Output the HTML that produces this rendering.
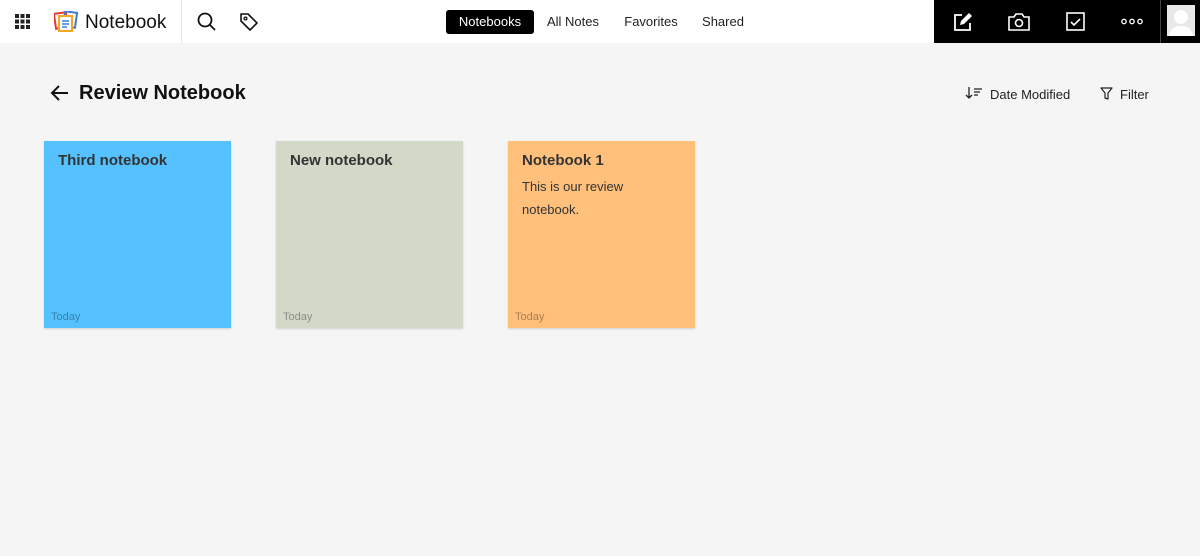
<!DOCTYPE html>
<html><head><style>
*{margin:0;padding:0;box-sizing:border-box}
body{width:1200px;height:556px;background:#f5f5f5;font-family:"Liberation Sans",sans-serif;position:relative;overflow:hidden}
.top{position:absolute;left:0;top:0;width:1200px;height:43px;background:#fff}
.blk{position:absolute;left:934px;top:0;width:266px;height:43px;background:#000}
.abs{position:absolute}
.tab{position:absolute;top:10px;height:24px;font-size:13px;line-height:24px;color:#222;text-align:center}
.card{position:absolute;top:141px;width:187px;height:187px;box-shadow:0 1px 2px rgba(0,0,0,.15)}
.card h3{position:absolute;left:14px;top:11px;font-size:15px;font-weight:bold;color:#333}
.card p{position:absolute;left:14px;top:34px;font-size:13px;line-height:23px;color:#333;width:160px}
.card span{position:absolute;left:7px;bottom:5px;font-size:11px;color:rgba(0,0,0,.35)}
</style></head><body>
<div class="top"></div>
<svg class="abs" style="left:15px;top:14px" width="15" height="15"><g fill="#222"><rect x="0" y="0" width="4" height="4"/><rect x="5.5" y="0" width="4" height="4"/><rect x="11" y="0" width="4" height="4"/><rect x="0" y="5.5" width="4" height="4"/><rect x="5.5" y="5.5" width="4" height="4"/><rect x="11" y="5.5" width="4" height="4"/><rect x="0" y="11" width="4" height="4"/><rect x="5.5" y="11" width="4" height="4"/><rect x="11" y="11" width="4" height="4"/></g></svg>
<svg class="abs" style="left:54px;top:11px" width="24" height="22"><rect x="1" y="2" width="12" height="15" fill="none" stroke="#e33" stroke-width="2" transform="rotate(-8 7 10)"/><rect x="10" y="1" width="12" height="15" fill="none" stroke="#3a7bd5" stroke-width="2" transform="rotate(8 16 9)"/><rect x="5" y="5" width="13" height="15" fill="#fff" stroke="#f5a623" stroke-width="2"/><path d="M8 10h7M8 13h7M8 16h5" stroke="#3a7bd5" stroke-width="1.5"/></svg>
<div class="abs" style="left:85px;top:12px;font-size:19px;color:#111">Notebook</div>
<div class="abs" style="left:181px;top:0;width:1px;height:43px;background:#e5e5e5"></div>
<svg class="abs" style="left:197px;top:12px" width="20" height="20"><circle cx="8" cy="8" r="6.5" fill="none" stroke="#111" stroke-width="1.8"/><path d="M13 13l5 5" stroke="#111" stroke-width="1.8"/></svg>
<svg class="abs" style="left:239px;top:12px" width="20" height="20"><path d="M2 2h7l9 9-7 7-9-9z" fill="none" stroke="#111" stroke-width="1.6" stroke-linejoin="round"/><circle cx="6.5" cy="6.5" r="1.4" fill="none" stroke="#111" stroke-width="1.3"/></svg>
<div class="tab" style="left:446px;width:88px;background:#000;color:#fff;border-radius:3px">Notebooks</div>
<div class="tab" style="left:543px;width:60px">All Notes</div>
<div class="tab" style="left:622px;width:58px">Favorites</div>
<div class="tab" style="left:700px;width:46px">Shared</div>
<div class="blk"></div>
<svg class="abs" style="left:953px;top:12px" width="20" height="20"><path d="M9 3H2v15h15v-7" fill="none" stroke="#fff" stroke-width="1.8"/><path d="M7 13l1-4 8-8 3 3-8 8z" fill="#fff"/></svg>
<svg class="abs" style="left:1008px;top:12px" width="22" height="20"><path d="M1 5h5l2-3h6l2 3h5v13H1z" fill="none" stroke="#fff" stroke-width="1.6"/><circle cx="11" cy="11" r="3.5" fill="none" stroke="#fff" stroke-width="1.6"/></svg>
<svg class="abs" style="left:1066px;top:12px" width="19" height="19"><rect x="1" y="1" width="17" height="17" fill="none" stroke="#fff" stroke-width="1.6"/><path d="M5 10l3 3 6-6" fill="none" stroke="#fff" stroke-width="1.6"/></svg>
<svg class="abs" style="left:1121px;top:18px" width="22" height="7"><g fill="none" stroke="#fff" stroke-width="1.3"><circle cx="3" cy="3.5" r="2.2"/><circle cx="11" cy="3.5" r="2.2"/><circle cx="19" cy="3.5" r="2.2"/></g></svg>
<div class="abs" style="left:1160px;top:0;width:1px;height:43px;background:#444"></div>
<div class="abs" style="left:1167px;top:5px;width:28px;height:31px;background:#e8e8e8;overflow:hidden"><svg width="28" height="31"><circle cx="14" cy="12" r="7" fill="#fff"/><path d="M2 31c1-8 6-10 12-10s11 2 12 10z" fill="#fff"/></svg></div>
<svg class="abs" style="left:50px;top:84px" width="20" height="18"><path d="M18 9H3M9 2L2 9l7 7" fill="none" stroke="#111" stroke-width="2"/></svg>
<div class="abs" style="left:79px;top:82px;font-size:20px;font-weight:bold;color:#111">Review Notebook</div>
<svg class="abs" style="left:965px;top:87px" width="18" height="13"><path d="M4 0v11M1 8l3 3 3-3" fill="none" stroke="#222" stroke-width="1.3"/><path d="M9 2h8M9 5h6M9 8h4" stroke="#222" stroke-width="1.2"/></svg>
<div class="abs" style="left:990px;top:87px;font-size:13px;color:#222">Date Modified</div>
<svg class="abs" style="left:1100px;top:87px" width="13" height="13"><path d="M1 1h11L8 6v6l-3-1V6z" fill="none" stroke="#222" stroke-width="1.2" stroke-linejoin="round"/></svg>
<div class="abs" style="left:1120px;top:87px;font-size:13px;color:#222">Filter</div>
<div class="card" style="left:44px;background:#56c1ff"><h3>Third notebook</h3><span>Today</span></div>
<div class="card" style="left:276px;background:#d2d9c9"><h3>New notebook</h3><span>Today</span></div>
<div class="card" style="left:508px;background:#ffc07c"><h3>Notebook 1</h3><p>This is our review notebook.</p><span>Today</span></div>
</body></html>
